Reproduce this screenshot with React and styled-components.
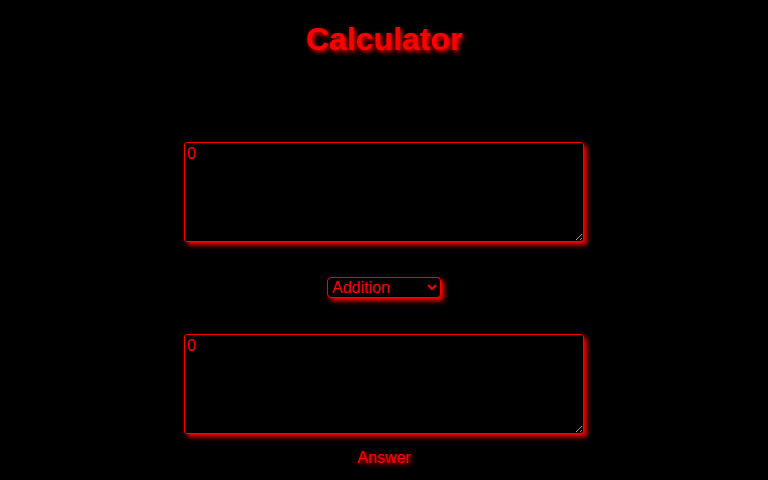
import React, { useState } from "react";
import styled, { createGlobalStyle } from "styled-components";

const Global = createGlobalStyle`
  html, body { margin: 0; padding: 0; background: #000; }
  body { font-family: "Liberation Sans", Arial, sans-serif; }
`;

const Page = styled.div`
  display: flex;
  flex-direction: column;
  align-items: center;
  min-height: 480px;
  background: #000;
`;

const Title = styled.h1`
  margin: 21px 0 0;
  font-size: 32px;
  line-height: 37px;
  font-weight: bold;
  color: #ff0000;
  text-shadow: 2px 2px 4px #ff0000;
`;

const Field = styled.textarea`
  box-sizing: border-box;
  width: 400px;
  height: 100px;
  margin-top: ${(p) => p.$top}px;
  padding: 2px;
  background: #000;
  color: #ff0000;
  border: 1px solid #ff0000;
  border-radius: 3px;
  font-family: "Liberation Sans", Arial, sans-serif;
  font-size: 16px;
  box-shadow: 3px 3px 5px #ff0000;
  outline: none;
`;

const Select = styled.select`
  box-sizing: border-box;
  width: 114px;
  height: 21px;
  margin-top: 35px;
  padding: 0;
  background: #000;
  color: #ff0000;
  border: 1px solid #ff0000;
  border-radius: 4px;
  font-family: "Liberation Sans", Arial, sans-serif;
  font-size: 16px;
  box-shadow: 3px 3px 5px #ff0000;
  outline: none;
`;

const Answer = styled.div`
  margin-top: 15px;
  font-size: 16px;
  line-height: 18px;
  color: #ff0000;
  text-shadow: 2px 2px 4px #ff0000;
`;

export default function App() {
  const [a, setA] = useState("0");
  const [b, setB] = useState("0");
  const [op, setOp] = useState("add");
  return (
    <>
      <Global />
      <Page>
        <Title>Calculator</Title>
        <Field $top={84} value={a} onChange={(e) => setA(e.target.value)} />
        <Select value={op} onChange={(e) => setOp(e.target.value)}>
          <option value="add">Addition</option>
          <option value="sub">Subtraction</option>
          <option value="mul">Multiplication</option>
          <option value="div">Division</option>
        </Select>
        <Field $top={36} value={b} onChange={(e) => setB(e.target.value)} />
        <Answer>Answer</Answer>
      </Page>
    </>
  );
}
